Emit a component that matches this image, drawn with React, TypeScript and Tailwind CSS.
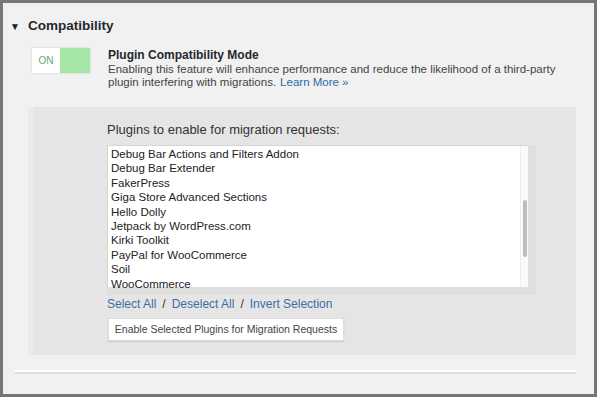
import React from 'react'

const plugins = [
  'Debug Bar Actions and Filters Addon',
  'Debug Bar Extender',
  'FakerPress',
  'Giga Store Advanced Sections',
  'Hello Dolly',
  'Jetpack by WordPress.com',
  'Kirki Toolkit',
  'PayPal for WooCommerce',
  'Soil',
  'WooCommerce',
]

export default function App() {
  return (
    <div className="w-[600px] h-[400px] bg-white font-['Liberation_Sans',Arial,sans-serif]">
      <div className="w-[597px] h-[397px] border-[3px] border-[#767676] bg-[#f1f1f1] flex flex-col">
        <div className="flex items-center pl-[7px] pt-[12px] h-[35px]">
          <span className="text-[10px] text-[#222] w-[18px]">▼</span>
          <h2 className="text-[13.5px] font-bold text-[#23282d]">Compatibility</h2>
        </div>

        <div className="flex pl-[29px] pt-[9px]">
          <div className="flex w-[58px] h-[25px] mt-[1px] shadow-[0_0_2px_rgba(0,0,0,0.15)]">
            <div className="w-[28px] bg-white flex items-center justify-center text-[10px] text-[#6aa37a]">
              ON
            </div>
            <div className="flex-1 bg-[#a3e6a6]" />
          </div>
          <div className="ml-[18px] pt-[1px]">
            <div className="text-[12px] font-bold text-[#23282d] leading-[15px]">Plugin Compatibility Mode</div>
            <div className="text-[11.5px] text-[#444] leading-[13px]">
              <div>Enabling this feature will enhance performance and reduce the likelihood of a third-party</div>
              <div className="flex gap-[4px]">
                <span>plugin interfering with migrations.</span>
                <span className="text-[#2a6ca8]">Learn More »</span>
              </div>
            </div>
          </div>
        </div>

        <div className="ml-[25px] mr-[18px] mt-[18px] bg-[#e5e5e5] border-l-[6px] border-[#eaeaea] h-[248px] pl-[73px] pt-[16px]">
          <div className="text-[13px] text-[#333] leading-[14px]">Plugins to enable for migration requests:</div>
          <div className="mt-[8px] w-[429px] h-[150px] bg-[#dfdfdf] pr-[8px] pb-[8px]">
            <div className="h-full bg-white flex border-t border-l border-[#d6d6d6]">
              <ul className="flex-1 pl-[3px] pt-[1px] text-[11.5px] text-[#222] leading-[14.4px]">
                {plugins.map((p) => (
                  <li key={p}>{p}</li>
                ))}
              </ul>
              <div className="w-[8px] bg-[#fafafa] border-l border-[#ededed] pt-[54px]">
                <div className="mx-auto w-[4px] h-[57px] bg-[#bdbdbd] rounded-sm" />
              </div>
            </div>
          </div>
          <div className="mt-[2px] text-[12px] leading-[14px] text-[#333] flex gap-[6px]">
            <span className="text-[#3a6ea5]">Select All</span>
            <span>/</span>
            <span className="text-[#3a6ea5]">Deselect All</span>
            <span>/</span>
            <span className="text-[#3a6ea5]">Invert Selection</span>
          </div>
          <button className="mt-[7px] ml-[1px] w-[236px] h-[23px] bg-white border border-[#ddd] shadow-[0_1px_1px_rgba(0,0,0,0.1)] text-[10.5px] text-[#444]">
            Enable Selected Plugins for Migration Requests
          </button>
        </div>

        <div className="ml-[12px] mr-[18px] mt-[15px] h-[4px] border-t-2 border-white border-b-2 border-b-[#dcdcdc]" />
      </div>
    </div>
  )
}
